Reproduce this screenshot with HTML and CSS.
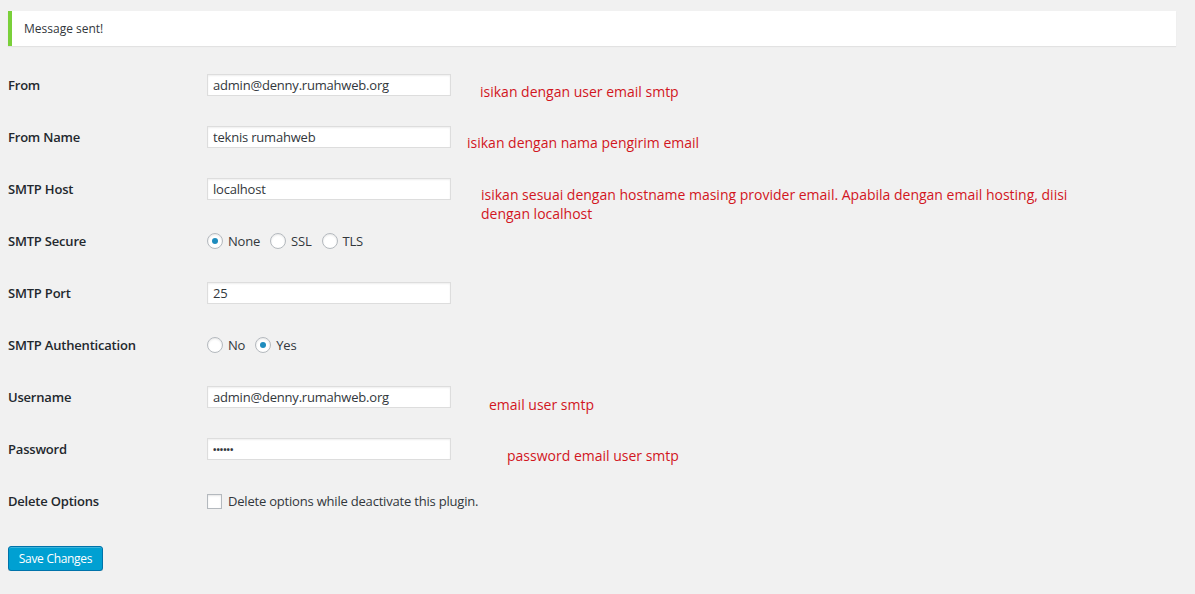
FILE: index.html
```html
<!DOCTYPE html>
<html>
<head>
<meta charset="utf-8">
<link rel="stylesheet" href="styles.css">
</head>
<body>
<div class="wrap">
  <div class="notice"><p>Message sent!</p></div>
  <form class="settings">
    <div class="row">
      <label class="lbl">From</label>
      <div class="field"><input class="text" type="text" value="admin@denny.rumahweb.org"></div>
      <span class="note note-from">isikan dengan user email smtp</span>
    </div>
    <div class="row">
      <label class="lbl">From Name</label>
      <div class="field"><input class="text" type="text" value="teknis rumahweb"></div>
      <span class="note note-name">isikan dengan nama pengirim email</span>
    </div>
    <div class="row">
      <label class="lbl">SMTP Host</label>
      <div class="field"><input class="text" type="text" value="localhost"></div>
      <span class="note note-host">isikan sesuai dengan hostname masing provider email. Apabila dengan email hosting, diisi<br>dengan localhost</span>
    </div>
    <div class="row">
      <label class="lbl">SMTP Secure</label>
      <div class="field radios">
        <span class="opt"><span class="radio on"></span>None</span>
        <span class="opt"><span class="radio"></span>SSL</span>
        <span class="opt"><span class="radio"></span>TLS</span>
      </div>
    </div>
    <div class="row">
      <label class="lbl">SMTP Port</label>
      <div class="field"><input class="text" type="text" value="25"></div>
    </div>
    <div class="row">
      <label class="lbl">SMTP Authentication</label>
      <div class="field radios">
        <span class="opt"><span class="radio"></span>No</span>
        <span class="opt"><span class="radio on"></span>Yes</span>
      </div>
    </div>
    <div class="row">
      <label class="lbl">Username</label>
      <div class="field"><input class="text" type="text" value="admin@denny.rumahweb.org"></div>
      <span class="note note-user">email user smtp</span>
    </div>
    <div class="row">
      <label class="lbl">Password</label>
      <div class="field"><input class="text pass" type="text" value="&#8226;&#8226;&#8226;&#8226;&#8226;&#8226;"></div>
      <span class="note note-pass">password email user smtp</span>
    </div>
    <div class="row">
      <label class="lbl">Delete Options</label>
      <div class="field check"><span class="box"></span>Delete options while deactivate this plugin.</div>
    </div>
    <div class="submit"><button type="button" class="btn">Save Changes</button></div>
  </form>
</div>
</body>
</html>
```
FILE: styles.css
```css
html, body {
  margin: 0;
  padding: 0;
  background: #f1f1f1;
}
body {
  font-family: "Open Sans", "Noto Sans", sans-serif;
  font-size: 13px;
  color: #23282d;
}
.wrap {
  padding: 11px 19px 0 8px;
}
.notice {
  background: #fff;
  border-left: 4px solid #7ad03a;
  box-shadow: 0 1px 1px rgba(0,0,0,0.06);
  height: 35px;
  display: flex;
  align-items: center;
  padding-left: 12px;
}
.notice p {
  margin: 0;
  font-size: 12px;
  color: #32373c;
}
.settings {
  margin-top: 13px;
}
.row {
  position: relative;
  display: grid;
  grid-template-columns: 199px 1fr;
  align-items: center;
  height: 52px;
}
.lbl {
  font-weight: 600;
  font-size: 13px;
  color: #23282d;
  letter-spacing: -0.2px;
}
.field {
  display: flex;
  align-items: center;
  color: #32373c;
}
.text {
  box-sizing: border-box;
  width: 244px;
  height: 22px;
  border: 1px solid #ddd;
  box-shadow: inset 0 1px 2px rgba(0,0,0,0.07);
  background: #fff;
  font-family: "Open Sans", "Noto Sans", sans-serif;
  font-size: 13px;
  color: #32373c;
  padding: 0 5px;
  margin: 0;
  letter-spacing: -0.2px;
}
.pass {
  font-size: 9px;
  font-weight: 700;
  letter-spacing: 0;
}
.radios .opt {
  display: flex;
  align-items: center;
  margin-right: 10px;
  letter-spacing: -0.2px;
}
.radio {
  box-sizing: border-box;
  width: 16px;
  height: 16px;
  border-radius: 50%;
  border: 1px solid #b4b9be;
  background: #fff;
  box-shadow: inset 0 1px 2px rgba(0,0,0,0.1);
  margin-right: 5px;
  display: flex;
  align-items: center;
  justify-content: center;
}
.radio.on::after {
  content: "";
  width: 6px;
  height: 6px;
  border-radius: 50%;
  background: #1e8cbe;
}
.check {
  letter-spacing: -0.2px;
}
.box {
  box-sizing: border-box;
  width: 15px;
  height: 15px;
  border: 1px solid #b4b9be;
  background: #fff;
  box-shadow: inset 0 1px 2px rgba(0,0,0,0.1);
  margin-right: 6px;
}
.note {
  position: absolute;
  color: #d2161e;
  font-family: "Open Sans", "Noto Sans", sans-serif;
  font-size: 14px;
  line-height: 19px;
  letter-spacing: 0;
  white-space: nowrap;
}
.note-from { left: 472px; top: 23px; }
.note-name { left: 459px; top: 22px; }
.note-host { left: 473px; top: 22px; }
.note-user { left: 481px; top: 24px; }
.note-pass { left: 499px; top: 23px; }
.submit {
  margin-top: 19px;
}
.btn {
  box-sizing: border-box;
  height: 25px;
  width: 95px;
  padding: 0;
  background: #00a0d2;
  border: 1px solid #0073aa;
  border-radius: 3px;
  box-shadow: inset 0 1px 0 rgba(120,200,230,0.5), 0 1px 0 rgba(0,0,0,0.15);
  color: #fff;
  font-family: "Open Sans", "Noto Sans", sans-serif;
  font-size: 12px;
  letter-spacing: -0.3px;
}
```
